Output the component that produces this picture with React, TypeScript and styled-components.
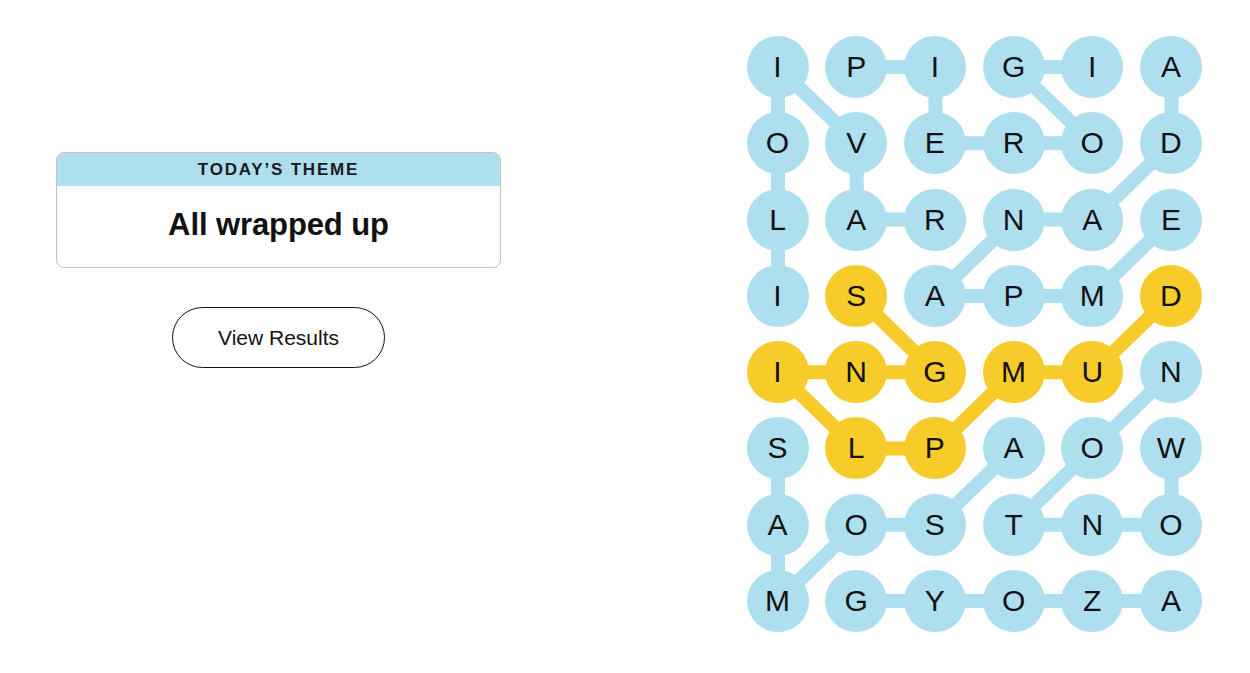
import React from "react";
import styled, { createGlobalStyle } from "styled-components";

const BLUE = "#AEDFEE";
const YELLOW = "#F7CB2A";
const CELL = 62;
const COL_GAP = 16.7;
const ROW_GAP = 14.3;

const GlobalStyle = createGlobalStyle`
  html, body { margin: 0; padding: 0; background: #ffffff; }
  body { font-family: "Liberation Sans", Arial, sans-serif; color: #121212; }
`;

const Page = styled.main`
  display: flex;
  align-items: flex-start;
  gap: 245.5px;
  padding: 36px 0 0 56px;
  box-sizing: border-box;
  width: 1250px;
  height: 673px;
`;

const LeftColumn = styled.section`
  width: 445px;
  padding-top: 116px;
  display: flex;
  flex-direction: column;
  align-items: center;
`;

const ThemeCard = styled.div`
  width: 100%;
  box-sizing: border-box;
  border: 1px solid #c2c2c2;
  border-radius: 8px;
  overflow: hidden;
  background: #fff;
`;

const ThemeHeader = styled.div`
  height: 33px;
  padding-top: 1px;
  box-sizing: border-box;
  background: ${BLUE};
  display: flex;
  align-items: center;
  justify-content: center;
  font-size: 17px;
  font-weight: 700;
  letter-spacing: 1.8px;
  color: #1a1a1a;
`;

const ThemeBody = styled.div`
  height: 81px;
  padding-bottom: 3px;
  box-sizing: border-box;
  display: flex;
  align-items: center;
  justify-content: center;
  font-size: 31px;
  font-weight: 700;
  letter-spacing: -0.1px;
  color: #121212;
`;

const ResultsButton = styled.button`
  margin-top: 39px;
  width: 213px;
  height: 61px;
  border: 1.5px solid #121212;
  border-radius: 999px;
  background: #fff;
  font-family: "Liberation Sans", Arial, sans-serif;
  font-size: 21px;
  color: #121212;
  cursor: pointer;
`;

const Board = styled.div`
  position: relative;
  display: grid;
  grid-template-columns: repeat(6, ${CELL}px);
  grid-auto-rows: ${CELL}px;
  column-gap: ${COL_GAP}px;
  row-gap: ${ROW_GAP}px;
`;

const Connectors = styled.svg`
  position: absolute;
  left: 0;
  top: 0;
  width: 100%;
  height: 100%;
  z-index: 0;
  overflow: visible;
`;

const Cell = styled.div<{ $spangram: boolean }>`
  position: relative;
  z-index: 1;
  width: ${CELL}px;
  height: ${CELL}px;
  border-radius: 50%;
  background: ${(p) => (p.$spangram ? YELLOW : BLUE)};
  display: flex;
  align-items: center;
  justify-content: center;
  font-size: 30px;
  font-weight: 400;
  color: #121212;
`;

const letters = [
  "IPIGIA",
  "OVEROD",
  "LARNAE",
  "ISAPMD",
  "INGMUN",
  "SLPAOW",
  "AOSTNO",
  "MGYOZA",
];

type P = [number, number];

const words: { path: P[]; spangram?: boolean }[] = [
  // PIEROGI
  { path: [[0, 1], [0, 2], [1, 2], [1, 3], [1, 4], [0, 3], [0, 4]] },
  // RAVIOLI
  { path: [[2, 2], [2, 1], [1, 1], [0, 0], [1, 0], [2, 0], [3, 0]] },
  // EMPANADA
  { path: [[2, 5], [3, 4], [3, 3], [3, 2], [2, 3], [2, 4], [1, 5], [0, 5]] },
  // DUMPLINGS
  { path: [[3, 5], [4, 4], [4, 3], [5, 2], [5, 1], [4, 0], [4, 1], [4, 2], [3, 1]], spangram: true },
  // SAMOSA
  { path: [[5, 0], [6, 0], [7, 0], [6, 1], [6, 2], [5, 3]] },
  // WONTON
  { path: [[5, 5], [6, 5], [6, 4], [6, 3], [5, 4], [4, 5]] },
  // GYOZA
  { path: [[7, 1], [7, 2], [7, 3], [7, 4], [7, 5]] },
];

const spangramCells = new Set(
  words.filter((w) => w.spangram).flatMap((w) => w.path.map(([r, c]) => `${r}-${c}`))
);

const cx = (c: number) => c * (CELL + COL_GAP) + CELL / 2;
const cy = (r: number) => r * (CELL + ROW_GAP) + CELL / 2;

export default function App() {
  return (
    <>
      <GlobalStyle />
      <Page>
        <LeftColumn>
          <ThemeCard>
            <ThemeHeader>TODAY’S THEME</ThemeHeader>
            <ThemeBody>All wrapped up</ThemeBody>
          </ThemeCard>
          <ResultsButton>View Results</ResultsButton>
        </LeftColumn>
        <Board>
          <Connectors aria-hidden="true">
            {words.map((w, wi) =>
              w.path.slice(1).map(([r, c], i) => {
                const [pr, pc] = w.path[i];
                return (
                  <line
                    key={`${wi}-${i}`}
                    x1={cx(pc)}
                    y1={cy(pr)}
                    x2={cx(c)}
                    y2={cy(r)}
                    stroke={w.spangram ? YELLOW : BLUE}
                    strokeWidth={14}
                  />
                );
              })
            )}
          </Connectors>
          {letters.flatMap((row, r) =>
            row.split("").map((ch, c) => (
              <Cell key={`${r}-${c}`} $spangram={spangramCells.has(`${r}-${c}`)}>
                {ch}
              </Cell>
            ))
          )}
        </Board>
      </Page>
    </>
  );
}
